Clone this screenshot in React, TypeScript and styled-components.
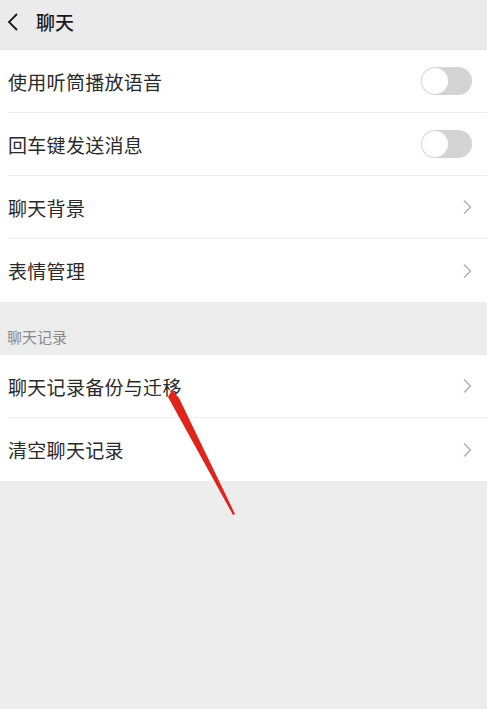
import styled, { createGlobalStyle } from "styled-components";

const GlobalStyle = createGlobalStyle`
  html, body {
    margin: 0;
    padding: 0;
    background: #ededed;
  }
  body {
    font-family: "Noto Sans CJK SC", "Noto Sans", sans-serif;
  }
`;

const Page = styled.div`
  position: relative;
  width: 487px;
  min-height: 709px;
  background: #ededed;
  overflow: hidden;
`;

const Header = styled.div`
  height: 50px;
  display: flex;
  align-items: center;
  padding: 0 0 6px 7px;
  gap: 17px;
  box-sizing: border-box;
  background: #ebebeb;
  border-bottom: 1px solid #e4e4e4;
`;

const Title = styled.span`
  font-size: 19px;
  font-weight: 500;
  color: #1a1a1a;
  line-height: 1;
`;

const Group = styled.div`
  background: #fff;
`;

const Row = styled.div<{ $last?: boolean }>`
  height: 63px;
  display: flex;
  align-items: center;
  justify-content: space-between;
  margin-left: 8px;
  padding-right: 15px;
  border-bottom: ${(p) => (p.$last ? "none" : "1px solid #ececec")};
  box-sizing: border-box;
`;

const Label = styled.span`
  font-size: 19px;
  color: #2a2a2a;
  letter-spacing: 0.3px;
`;

const SectionTitle = styled.div`
  height: 53px;
  display: flex;
  align-items: flex-end;
  padding: 0 0 8px 7px;
  box-sizing: border-box;
  font-size: 15px;
  color: #8a8a8a;
`;

const Track = styled.div`
  width: 51px;
  height: 28px;
  border-radius: 14px;
  background: #d4d4d4;
  position: relative;
  box-sizing: border-box;
`;

const Knob = styled.div`
  position: absolute;
  left: 1px;
  top: 1px;
  width: 26px;
  height: 26px;
  border-radius: 50%;
  background: #fff;
`;

const Arrow = styled.svg`
  position: absolute;
  left: 0;
  top: 0;
  pointer-events: none;
`;

const Toggle = () => (
  <Track>
    <Knob />
  </Track>
);

const Chevron = () => (
  <svg width="10" height="16" viewBox="0 0 10 16">
    <path d="M2 1.5 L8.5 8 L2 14.5" fill="none" stroke="#b3b3b3" strokeWidth="1.5" />
  </svg>
);

const BackIcon = () => (
  <svg width="12" height="20" viewBox="0 0 12 20">
    <path d="M10 2 L2 10 L10 18" fill="none" stroke="#1a1a1a" strokeWidth="1.8" />
  </svg>
);

const settings = [
  { label: "使用听筒播放语音", toggle: true },
  { label: "回车键发送消息", toggle: true },
  { label: "聊天背景" },
  { label: "表情管理" },
];

const records = [{ label: "聊天记录备份与迁移" }, { label: "清空聊天记录" }];

export default function App() {
  return (
    <Page>
      <GlobalStyle />
      <Header>
        <BackIcon />
        <Title>聊天</Title>
      </Header>
      <Group>
        {settings.map((s, i) => (
          <Row key={s.label} $last={i === settings.length - 1}>
            <Label>{s.label}</Label>
            {s.toggle ? <Toggle /> : <Chevron />}
          </Row>
        ))}
      </Group>
      <SectionTitle>聊天记录</SectionTitle>
      <Group>
        {records.map((s, i) => (
          <Row key={s.label} $last={i === records.length - 1}>
            <Label>{s.label}</Label>
            <Chevron />
          </Row>
        ))}
      </Group>
      <Arrow width="487" height="709">
        <polygon points="172,390 179,398 235,514 233,515 168,397" fill="#e0231b" />
      </Arrow>
    </Page>
  );
}
